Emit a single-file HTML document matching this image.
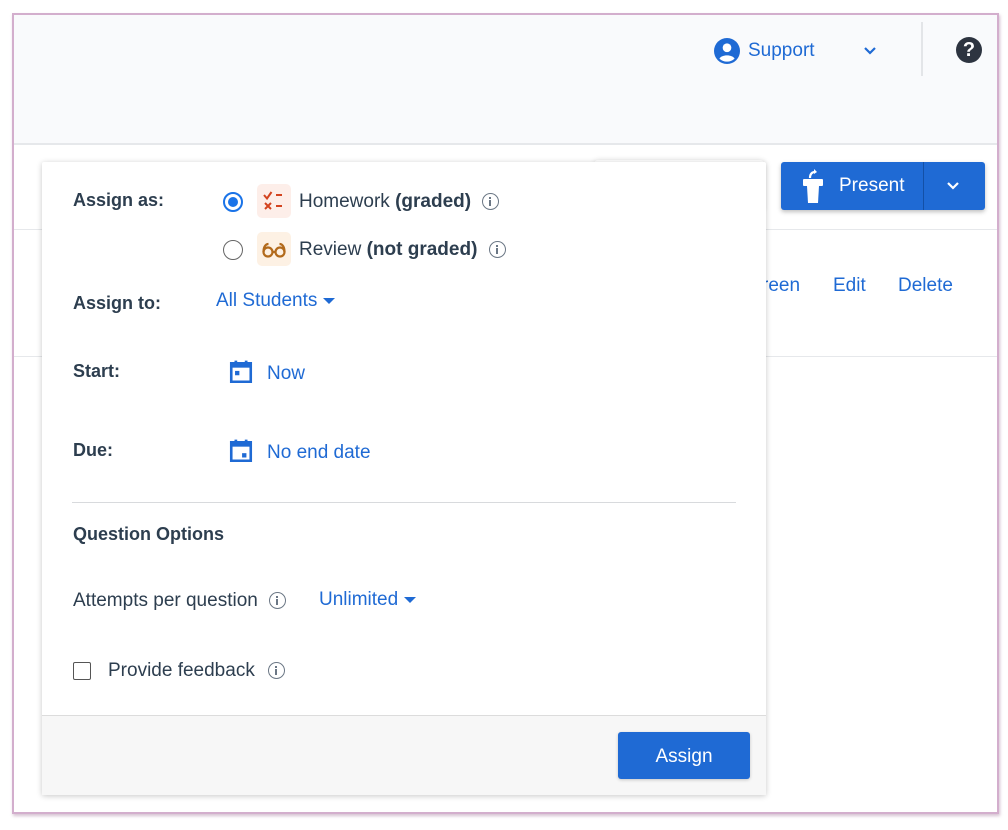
<!DOCTYPE html>
<html><head><style>
*{box-sizing:border-box}
body{margin:0;width:1008px;height:830px;background:#fff;font-family:"Liberation Sans",sans-serif;position:relative;overflow:hidden}
.frame{position:absolute;left:12px;top:13px;width:987px;height:801px;border:2px solid #d3aecd;box-shadow:1px 2px 3px rgba(150,100,140,.4);background:#fff;overflow:hidden}
.hdr{position:absolute;left:0;top:0;right:0;height:130px;background:#f9fafc;border-bottom:2px solid #e6e8eb}
.abs{position:absolute}
.blue{color:#1f6ad4}
.dark{color:#2d3e4f}
.line{position:absolute;left:0;right:0;height:1px;background:#e6e8eb}
.pop{position:absolute;left:42px;top:162px;width:724px;height:633px;background:#fff;box-shadow:0 1px 6px rgba(0,0,0,.22);border-radius:2px}
.lbl{position:absolute;left:31px;font-size:18px;font-weight:bold;color:#2d3e4f}
.t18{font-size:19px}
.info{display:inline-block;width:17px;height:17px;border:1.5px solid #6b7785;border-radius:50%;position:relative;vertical-align:middle}
.info:after{content:"";position:absolute;left:6px;top:6px;width:2px;height:6px;background:#6b7785}
.info:before{content:"";position:absolute;left:6px;top:2.5px;width:2px;height:2px;background:#6b7785}
.caret{display:inline-block;width:0;height:0;border-left:6px solid transparent;border-right:6px solid transparent;border-top:6px solid #1f6ad4;vertical-align:middle;margin-left:6px}
</style></head><body>
<div class="frame">
 <div class="hdr">
  <svg class="abs" style="left:700px;top:23px" width="26" height="26" viewBox="0 0 24 24"><circle cx="12" cy="12" r="12" fill="#1f6ad4"/><circle cx="12" cy="9" r="4" fill="#fff"/><path d="M5 19c2-4 12-4 14 0a10 10 0 0 1-14 0z" fill="#fff"/></svg>
  <div class="abs blue t18" style="left:734px;top:25px">Support</div>
  <svg class="abs" style="left:848px;top:29px" width="16" height="14" viewBox="0 0 16 14"><path d="M3 4l5 5 5-5" stroke="#1f6ad4" stroke-width="2.2" fill="none"/></svg>
  <div class="abs" style="left:907px;top:7px;width:2px;height:54px;background:#e3e5e8"></div>
  <div class="abs" style="left:942px;top:22px;width:26px;height:26px;border-radius:50%;background:#2d3440;color:#fff;font-weight:bold;font-size:20px;text-align:center;line-height:26px">?</div>
 </div>
 <div class="line" style="top:214px"></div>
 <div class="line" style="top:341px"></div>
 <div class="abs" style="left:580px;top:145px;width:170px;height:52px;border-radius:4px;box-shadow:0 0 6px rgba(0,0,0,.12)"></div>
 <div class="abs" style="left:767px;top:147px;width:204px;height:48px;background:#1f6ad4;border-radius:3px;box-shadow:0 2px 4px rgba(0,0,0,.25)">
  <svg class="abs" style="left:19px;top:6px" width="28" height="36" viewBox="0 0 28 36"><path d="M10 10c0-4 2-6 5-6" stroke="#fff" stroke-width="2.2" fill="none"/><path d="M14 1l3 3-3 2z" fill="#fff"/><rect x="3" y="11" width="20" height="7" rx="1" fill="#fff"/><path d="M7 18h12l-1 17h-10z" fill="#fff"/></svg>
  <div class="abs t18" style="left:58px;top:13px;color:#fff">Present</div>
  <div class="abs" style="left:142px;top:0;width:1px;height:48px;background:#1350a6"></div>
  <svg class="abs" style="left:164px;top:17px" width="16" height="14" viewBox="0 0 16 14"><path d="M3 4l5 5 5-5" stroke="#fff" stroke-width="2.2" fill="none"/></svg>
 </div>
 <div class="abs blue t18" style="left:748px;top:260px">reen</div>
 <div class="abs blue t18" style="left:819px;top:260px">Edit</div>
 <div class="abs blue t18" style="left:884px;top:260px">Delete</div>
</div>

<div class="pop">
 <div class="lbl" style="top:28px">Assign as:</div>
 <div class="abs" style="left:181px;top:30px;width:20px;height:20px;border:2px solid #1a73e8;border-radius:50%"><div style="position:absolute;left:3px;top:3px;width:10px;height:10px;border-radius:50%;background:#1a73e8"></div></div>
 <div class="abs" style="left:215px;top:22px;width:34px;height:34px;background:#fdeee9;border-radius:5px">
  <svg width="34" height="34" viewBox="0 0 34 34"><path d="M7 11l3 3.5 4.5-6.5M8 19l6 6M14 19l-6 6M19 11h6M19 22h6" stroke="#d3431f" stroke-width="2" fill="none"/></svg>
 </div>
 <div class="abs dark t18" style="left:257px;top:29px">Homework <b>(graded)</b> <span class="info" style="margin-left:6px"></span></div>
 <div class="abs" style="left:181px;top:78px;width:20px;height:20px;border:1.5px solid #666;border-radius:50%"></div>
 <div class="abs" style="left:215px;top:70px;width:34px;height:34px;background:#fdf1e4;border-radius:5px">
  <svg width="34" height="34" viewBox="0 0 34 34"><circle cx="11" cy="20" r="4.5" stroke="#b26a1c" stroke-width="2.2" fill="none"/><circle cx="23" cy="20" r="4.5" stroke="#b26a1c" stroke-width="2.2" fill="none"/><path d="M6.5 20c0-5 2-8 5-8M27.5 20c0-5-2-8-5-8M15.5 20h3" stroke="#b26a1c" stroke-width="2.2" fill="none"/></svg>
 </div>
 <div class="abs dark t18" style="left:257px;top:77px">Review <b>(not graded)</b> <span class="info" style="margin-left:6px"></span></div>

 <div class="lbl" style="top:131px">Assign to:</div>
 <div class="abs blue t18" style="left:174px;top:128px">All Students<span class="caret"></span></div>

 <div class="lbl" style="top:199px">Start:</div>
 <svg class="abs" style="left:186px;top:197px" width="26" height="26" viewBox="0 0 24 24"><path d="M3 4h18v17H3z" fill="none" stroke="#1f6ad4" stroke-width="2.4"/><rect x="3" y="4" width="18" height="4" fill="#1f6ad4"/><rect x="6" y="1.5" width="2.5" height="4" fill="#1f6ad4"/><rect x="15.5" y="1.5" width="2.5" height="4" fill="#1f6ad4"/><rect x="6.5" y="11" width="4" height="4" fill="#1f6ad4"/></svg>
 <div class="abs blue t18" style="left:225px;top:201px">Now</div>

 <div class="lbl" style="top:278px">Due:</div>
 <svg class="abs" style="left:186px;top:276px" width="26" height="26" viewBox="0 0 24 24"><path d="M3 4h18v17H3z" fill="none" stroke="#1f6ad4" stroke-width="2.4"/><rect x="3" y="4" width="18" height="4" fill="#1f6ad4"/><rect x="6" y="1.5" width="2.5" height="4" fill="#1f6ad4"/><rect x="15.5" y="1.5" width="2.5" height="4" fill="#1f6ad4"/><rect x="13" y="14" width="4" height="4" fill="#1f6ad4"/></svg>
 <div class="abs blue t18" style="left:225px;top:280px">No end date</div>

 <div class="abs" style="left:30px;top:340px;width:664px;height:1px;background:#d8dadd"></div>
 <div class="lbl" style="top:362px">Question Options</div>
 <div class="abs dark t18" style="left:31px;top:428px">Attempts per question <span class="info" style="margin-left:6px"></span></div>
 <div class="abs blue t18" style="left:277px;top:427px">Unlimited<span class="caret"></span></div>
 <div class="abs" style="left:31px;top:500px;width:18px;height:18px;border:1.5px solid #555;border-radius:2px"></div>
 <div class="abs dark t18" style="left:66px;top:498px">Provide feedback <span class="info" style="margin-left:8px"></span></div>

 <div class="abs" style="left:0;top:553px;width:724px;height:80px;background:#f7f7f7;border-top:1px solid #dcdcdc">
  <div class="abs" style="left:576px;top:16px;width:132px;height:47px;background:#1f6ad4;border-radius:3px;color:#fff;font-size:19px;text-align:center;line-height:49px;box-shadow:0 1px 3px rgba(0,0,0,.2)">Assign</div>
 </div>
</div>
</body></html>
